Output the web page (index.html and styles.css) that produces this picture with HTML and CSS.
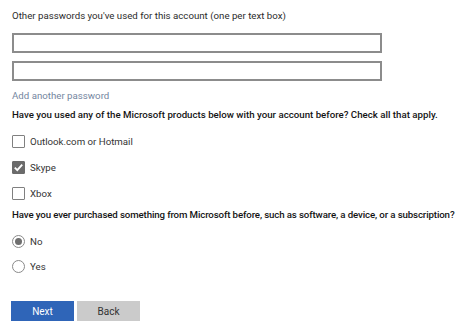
FILE: index.html
```html
<!DOCTYPE html>
<html lang="en">
<head>
    <meta charset="UTF-8">
    <meta name="viewport" content="width=device-width, initial-scale=1.0">
    <title>Account recovery</title>
    <link rel="stylesheet" href="styles.css">
</head>
<body>
    <form class="recovery-form">
        <!-- Previous passwords -->
        <label class="field-label" for="pw1">Other passwords you've used for this account (one per text box)</label>
        <input class="text-box" id="pw1" type="password">
        <input class="text-box" type="password">
        <a class="add-link" href="#">Add another password</a>

        <!-- Products -->
        <p class="question">Have you used any of the Microsoft products below with your account before? Check all that apply.</p>
        <div class="option check-option">
            <span class="checkbox"></span>
            <span class="option-text">Outlook.com or Hotmail</span>
        </div>
        <div class="option check-option">
            <span class="checkbox checked">
                <svg viewBox="0 0 13 13" width="13" height="13">
                    <path d="M2.8 6.6 L5.3 9.1 L10.2 3.6" fill="none" stroke="#fff" stroke-width="1.9"/>
                </svg>
            </span>
            <span class="option-text">Skype</span>
        </div>
        <div class="option check-option">
            <span class="checkbox"></span>
            <span class="option-text">Xbox</span>
        </div>

        <!-- Purchases -->
        <p class="question question-second">Have you ever purchased something from Microsoft before, such as software, a device, or a subscription?</p>
        <div class="option radio-option">
            <span class="radio checked"></span>
            <span class="option-text">No</span>
        </div>
        <div class="option radio-option">
            <span class="radio"></span>
            <span class="option-text">Yes</span>
        </div>

        <div class="buttons">
            <button class="btn btn-primary" type="button">Next</button>
            <button class="btn btn-secondary" type="button">Back</button>
        </div>
    </form>
</body>
</html>
```

FILE: styles.css
```css
* {
    margin: 0;
    padding: 0;
    box-sizing: border-box;
}

body {
    font-family: Roboto, "Open Sans", sans-serif;
    font-size: 9.7px;
    color: #2b2b2b;
    background: #ffffff;
}

.recovery-form {
    display: flex;
    flex-direction: column;
    align-items: flex-start;
    padding: 8px 12px;
}

.field-label {
    line-height: 16px;
    margin-bottom: 9px;
    white-space: nowrap;
}

.text-box {
    width: 370px;
    height: 20px;
    border: 2px solid #8c8c8c;
    background: #fff;
    margin-bottom: 8px;
}

.text-box:last-of-type {
    margin-bottom: 0;
}

.add-link {
    margin-top: 7px;
    line-height: 16px;
    color: #7486a0;
    text-decoration: none;
}

/* Questions */
.question {
    margin-top: 3px;
    margin-bottom: 5px;
    line-height: 16px;
    font-weight: 500;
    color: #141414;
    white-space: nowrap;
}

.question-second {
    margin-top: 1px;
    margin-bottom: 6px;
    letter-spacing: -0.13px;
}

.option {
    display: flex;
    align-items: center;
    gap: 5px;
    height: 26px;
    color: #333;
}

.radio-option {
    height: 25px;
}

.checkbox {
    width: 13px;
    height: 13px;
    border: 1px solid #808080;
    border-radius: 1px;
    display: flex;
    align-items: center;
    justify-content: center;
}

.checkbox.checked {
    background: #6b6b6b;
    border-color: #6b6b6b;
}

.checkbox svg {
    display: block;
    flex-shrink: 0;
}

.radio {
    width: 13px;
    height: 13px;
    border: 1px solid #8a8a8a;
    border-radius: 50%;
    display: flex;
    align-items: center;
    justify-content: center;
}

.radio.checked::after {
    content: '';
    width: 7px;
    height: 7px;
    border-radius: 50%;
    background: #6f6f6f;
}

/* Buttons */
.buttons {
    display: flex;
    gap: 3px;
    margin-top: 22px;
    margin-left: -1px;
}

.btn {
    width: 63px;
    height: 20px;
    border: none;
    font-family: inherit;
    font-size: 10px;
}

.btn-primary {
    background: #2f65b8;
    color: #fff;
}

.btn-secondary {
    background: #cbcbcb;
    color: #333;
}
```
